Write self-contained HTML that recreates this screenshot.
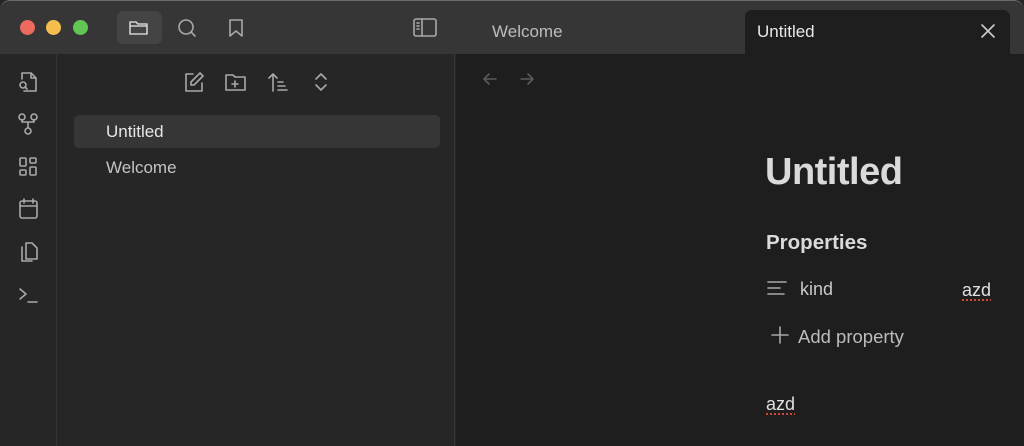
<!DOCTYPE html>
<html><head><meta charset="utf-8"><style>
*{margin:0;padding:0;box-sizing:border-box}
body{width:1024px;height:446px;overflow:hidden;background:#262626;font-family:"Liberation Sans",sans-serif;position:relative}
.abs{position:absolute}
svg{position:absolute;fill:none;stroke:#a8a8a8;stroke-width:1.6;stroke-linecap:round;stroke-linejoin:round}
.t{color:#dadada;position:absolute;white-space:nowrap}
</style></head><body>
<div class="abs" style="left:0;top:0;width:1024px;height:54px;background:#363636;border-top:1px solid #6a6a6a;border-radius:10px 10px 0 0"></div>
<div class="abs" style="left:20px;top:20px;width:15px;height:15px;border-radius:50%;background:#ec6a5e"></div>
<div class="abs" style="left:46px;top:20px;width:15px;height:15px;border-radius:50%;background:#f4be4f"></div>
<div class="abs" style="left:73px;top:20px;width:15px;height:15px;border-radius:50%;background:#61c554"></div>
<div class="abs" style="left:117px;top:11px;width:45px;height:33px;border-radius:6px;background:#444"></div>
<svg style="left:128px;top:17px" width="22" height="22" viewBox="0 0 22 22"><path d="M2 5h6l2 2h9v10H2z M2 9h17" stroke="#d0d0d0"/></svg>
<svg style="left:176px;top:17px" width="22" height="22" viewBox="0 0 22 22"><circle cx="10" cy="10" r="7"/><path d="M15 15l4 4"/></svg>
<svg style="left:226px;top:17px" width="22" height="22" viewBox="0 0 22 22"><path d="M4 3h12v16l-6-5-6 5z"/></svg>
<svg style="left:412px;top:17px" width="26" height="22" viewBox="0 0 26 22"><rect x="2" y="2" width="22" height="17" rx="2"/><path d="M10 2v17M5 6h2M5 9h2M5 12h2"/></svg>
<div class="t" style="left:492px;top:22px;font-size:17px;color:#bdbdbd">Welcome</div>
<div class="abs" style="left:745px;top:10px;width:265px;height:44px;background:#1e1e1e;border-radius:7px 7px 0 0"></div>
<div class="t" style="left:757px;top:22px;font-size:17px;color:#e8e8e8">Untitled</div>
<svg style="left:979px;top:22px" width="18" height="18" viewBox="0 0 18 18"><path d="M3 3l12 12M15 3L3 15" stroke="#ccc"/></svg>
<div class="abs" style="left:0;top:54px;width:57px;height:392px;background:#262626;border-right:1px solid #333"></div>
<svg style="left:17px;top:70px" width="22" height="24" viewBox="0 0 22 24"><path d="M5 9V3h9l5 5v13H7M14 3v5h5"/><circle cx="6" cy="15" r="3"/><path d="M8 17l2 2"/></svg>
<svg style="left:17px;top:112px" width="22" height="24" viewBox="0 0 22 24"><circle cx="5" cy="5" r="3"/><circle cx="17" cy="5" r="3"/><circle cx="11" cy="19" r="3"/><path d="M5 8v2h12V8M11 10v6"/></svg>
<svg style="left:17px;top:155px" width="22" height="24" viewBox="0 0 22 24"><rect x="3" y="3" width="6" height="8" rx="1"/><rect x="13" y="3" width="6" height="5" rx="1"/><rect x="3" y="15" width="6" height="5" rx="1"/><rect x="13" y="12" width="6" height="8" rx="1"/></svg>
<svg style="left:17px;top:197px" width="22" height="24" viewBox="0 0 22 24"><rect x="3" y="4" width="17" height="17" rx="2"/><path d="M3 9h17M7 2v4M16 2v4"/></svg>
<svg style="left:17px;top:240px" width="22" height="24" viewBox="0 0 22 24"><path d="M9 3h6l5 5v11H9z M5 7v14h10"/></svg>
<svg style="left:17px;top:283px" width="22" height="24" viewBox="0 0 22 24"><path d="M3 6l6 5-6 5M11 19h9"/></svg>
<div class="abs" style="left:57px;top:54px;width:398px;height:392px;background:#262626;border-right:1px solid #363636"></div>
<svg style="left:182px;top:70px" width="24" height="24" viewBox="0 0 24 24"><path d="M11 4H4v17h16v-8M18 3l3 3-9 9H9v-3z"/></svg>
<svg style="left:224px;top:70px" width="24" height="24" viewBox="0 0 24 24"><path d="M2 5h7l2 2h10v13H2z M11 11v6M8 14h6"/></svg>
<svg style="left:266px;top:70px" width="24" height="24" viewBox="0 0 24 24"><path d="M3 8l4-4 4 4M7 4v17M12 12h5M12 16h7M12 20h9"/></svg>
<svg style="left:309px;top:70px" width="24" height="24" viewBox="0 0 24 24"><path d="M7 9l5-5 5 5M7 15l5 5 5-5"/></svg>
<div class="abs" style="left:74px;top:115px;width:366px;height:33px;background:#363636;border-radius:5px"></div>
<div class="t" style="left:106px;top:122px;font-size:17px;color:#e6e6e6">Untitled</div>
<div class="t" style="left:106px;top:158px;font-size:17px;color:#c4c4c4">Welcome</div>
<div class="abs" style="left:456px;top:54px;width:568px;height:392px;background:#1e1e1e"></div>
<svg style="left:480px;top:69px" width="20" height="20" viewBox="0 0 20 20"><path d="M16 10H4M9 5l-5 5 5 5" stroke="#5a5a5a"/></svg>
<svg style="left:517px;top:69px" width="20" height="20" viewBox="0 0 20 20"><path d="M4 10h12M11 5l5 5-5 5" stroke="#5a5a5a"/></svg>
<div class="t" style="left:765px;top:151px;font-size:38px;font-weight:bold;color:#dadada;letter-spacing:-0.5px">Untitled</div>
<div class="t" style="left:766px;top:231px;font-size:20.5px;font-weight:bold;color:#dadada">Properties</div>
<svg style="left:766px;top:279px" width="22" height="18" viewBox="0 0 22 18"><path d="M2 3h18M2 9h12M2 15h16"/></svg>
<div class="t" style="left:800px;top:279px;font-size:18px;color:#c8c8c8">kind</div>
<div class="t" style="left:962px;top:280px;font-size:18px;color:#e0e0e0;text-decoration:underline dotted #d0473a 2px;text-underline-offset:3px">azd</div>
<svg style="left:770px;top:325px" width="20" height="20" viewBox="0 0 20 20"><path d="M10 2v16M2 10h16"/></svg>
<div class="t" style="left:798px;top:326px;font-size:18.5px;color:#bcbcbc">Add property</div>
<div class="t" style="left:766px;top:394px;font-size:18px;color:#e0e0e0;text-decoration:underline dotted #d0473a 2px;text-underline-offset:3px">azd</div>
</body></html>
